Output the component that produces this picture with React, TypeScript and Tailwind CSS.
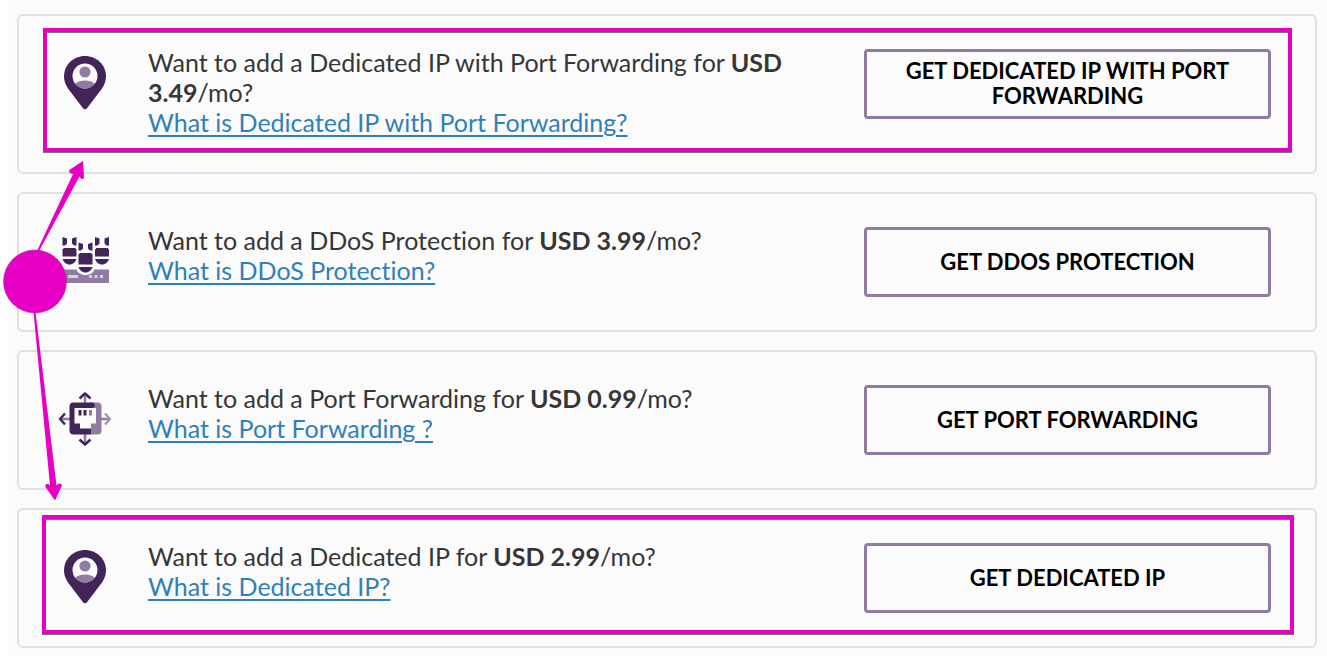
import type { ReactNode } from "react";
import { clsx } from "clsx";

function PinIcon() {
  return (
    <svg viewBox="0 0 54 54" className="size-[54px]" aria-hidden="true">
      <path
        d="M27 0C15.4 0 6 9 6 20.3c0 4.3 1.4 8.4 4 12.300L25 52.300c1.100 1.300 2.900 1.300 4 0L44 32.600c2.600-3.900 4-8 4-12.300C48 9 38.600 0 27 0Z"
        fill="#432458"
      />
      <circle cx="27" cy="20" r="12.5" fill="#fbfbfb" />
      <circle cx="27" cy="16" r="5.6" fill="#917ba0" />
      <path d="M17.200 27.800c2.500-2.200 6-3.300 9.800-3.300s7.300 1.100 9.800 3.300A12.500 12.500 0 0 1 27 32.500a12.500 12.500 0 0 1-9.800-4.700Z" fill="#917ba0" />
    </svg>
  );
}

function DdosIcon() {
  return (
    <svg viewBox="0 0 54 54" className="size-[54px]" aria-hidden="true">
      <path d="M4 35.500h47V49H4Z" fill="#917ba0" />
      <path d="M10 41h10v3H10ZM31 41h3v3h-3ZM36.500 41h3v3h-3ZM42 41h3v3h-3Z" fill="#d9d0df" />
      <path d="M18.500 35H36.500C36 38.500 32 41 27.500 41S19 38.500 18.500 35Z" fill="#fbfbfb" />
      <g fill="#432458">
        <path d="M4.500 3l4.500 1.500V9.500L7 11.500H4.500ZM18.500 3L14 4.500V9.500l2 2h2.500Z" />
        <path d="M6 14h11l1.500 1.500V22.500h-14V15.500Z" />
        <path d="M4.500 25h14C17.500 28 15 30.500 11.500 30.500S5.500 28 4.500 25Z" />
        <path d="M37 3l4.500 1.500V9.500l-2 2H37ZM51 3l-4.500 1.500V9.500l2 2H51Z" />
        <path d="M38.500 14h11l1.500 1.500V22.500H37V15.500Z" />
        <path d="M37 25h14C50 28 47.500 30.500 44 30.500S38 28 37 25Z" />
        <path d="M20.500 8.500L25 10v4.500l-2 2h-2.500ZM34.500 8.500L30 10v4.500l2 2h2.500Z" />
        <path d="M22 19h11l1.500 1.500V30.500h-14V20.500Z" />
        <path d="M20.500 33h14C33.500 36 31 38.500 27.500 38.500S21.500 36 20.500 33Z" />
      </g>
    </svg>
  );
}

function PortIcon() {
  return (
    <svg viewBox="0 0 54 54" className="size-[54px]" fill="none" aria-hidden="true">
      <g strokeWidth="2.5" strokeLinejoin="round">
        <path d="M27 11V3M12 27H3M27 42v9M42 27h9" stroke="#917ba0" />
        <path d="M21.500 6.500l5.500-5 5.500 5M7 21.500l-5 5.500 5 5.500M21.500 47.500l5.500 5 5.500-5" stroke="#432458" />
        <path d="M47 21.500l5 5.500-5 5.500" stroke="#a696b2" />
      </g>
      <path d="M15.500 10.500H33v32H15.500a4 4 0 0 1-4-4v-24a4 4 0 0 1 4-4Z" fill="#432458" />
      <path d="M33 10.500h6.500a4 4 0 0 1 4 4v24a4 4 0 0 1-4 4H33Z" fill="#917ba0" />
      <path d="M32 10.500h2a2 2 0 0 1 0 5.500h-2Z" fill="#432458" />
      <path d="M16.500 16H38v15.500h-5V36.500H22v-5h-5.500Z" fill="#fbfbfb" />
      <path d="M20.500 18h3v5.500h-3ZM25.500 18h3v5.500h-3Z" fill="#432458" />
      <path d="M31 18h3v5.500h-3Z" fill="#917ba0" />
    </svg>
  );
}

type Addon = {
  name: string;
  price: string;
  question: string;
  action: string;
  icon: ReactNode;
  highlight?: string;
};

const addons: Addon[] = [
  {
    name: "Dedicated IP with Port Forwarding",
    price: "USD 3.49",
    question: "What is Dedicated IP with Port Forwarding?",
    action: "GET DEDICATED IP WITH PORT FORWARDING",
    icon: <PinIcon />,
    highlight: "top-3 right-[23px] bottom-5 left-6"
  },
  {
    name: "DDoS Protection",
    price: "USD 3.99",
    question: "What is DDoS Protection?",
    action: "GET DDOS PROTECTION",
    icon: <DdosIcon />
  },
  {
    name: "Port Forwarding",
    price: "USD 0.99",
    question: "What is Port Forwarding ?",
    action: "GET PORT FORWARDING",
    icon: <PortIcon />
  },
  {
    name: "Dedicated IP",
    price: "USD 2.99",
    question: "What is Dedicated IP?",
    action: "GET DEDICATED IP",
    icon: <PinIcon />,
    highlight: "top-[5px] right-[21px] bottom-3 left-[23px]"
  }
];

function AddonCard({ addon }: { addon: Addon }) {
  return (
    <li className="relative flex items-start rounded-md border-2 border-[#e0e0e0] py-[33px] pr-11 pl-[39px]">
      <div className="mt-[7px] mr-9 shrink-0">{addon.icon}</div>
      <div className="-mt-0.5 min-w-0 flex-1 pr-16 pb-0.5 text-[25px] leading-[30px] text-[#363636]">
        <p>
          Want to add a {addon.name} for <strong className="font-bold">{addon.price}</strong>/mo?
        </p>
        <a href="#" className="text-[#2e80bd] underline decoration-2 underline-offset-3">
          {addon.question}
        </a>
      </div>
      <button
        type="button"
        className="min-h-[70px] w-[407px] shrink-0 rounded-sm border-3 border-[#917ba0] px-6 pb-0.5 text-[22px] leading-[25px] font-bold text-black"
      >
        {addon.action}
      </button>
      {addon.highlight && (
        <span
          className={clsx(
            "pointer-events-none absolute border-4 border-[#e600c4] shadow-[0_1px_0_#777,inset_0_1px_0_#777]",
            addon.highlight
          )}
        />
      )}
    </li>
  );
}

function Callout() {
  return (
    <svg
      width="130"
      height="657"
      viewBox="0 0 130 657"
      className="pointer-events-none absolute top-0 left-0"
      fill="#e600c4"
      aria-hidden="true"
    >
      <path d="M36.500 252L73 174L70 173Q68 171 70 169.500L83 161L84 177.500Q83 180 81 178.500L79.500 176.500L38.500 252Z" />
      <path d="M33.500 312L50 485.500L48.500 484Q44.500 483.500 45.500 487L55 500.500L62 485.500Q61 482 57.500 484.500L56.500 485.500L35.500 312Z" />
      <circle cx="35" cy="281.500" r="31.500" stroke="#a3188f" strokeWidth=".5" />
    </svg>
  );
}

export default function App() {
  return (
    <main className="relative bg-white pl-2 font-[Lato,'Open_Sans',sans-serif] [font-variant-ligatures:none]">
      <ul className="flex flex-col gap-[18px] bg-[#fbfbfb] pt-3.5 pr-2.5 pb-2 pl-[9px]">
        {addons.map((addon) => (
          <AddonCard key={addon.name} addon={addon} />
        ))}
      </ul>
      <Callout />
    </main>
  );
}
